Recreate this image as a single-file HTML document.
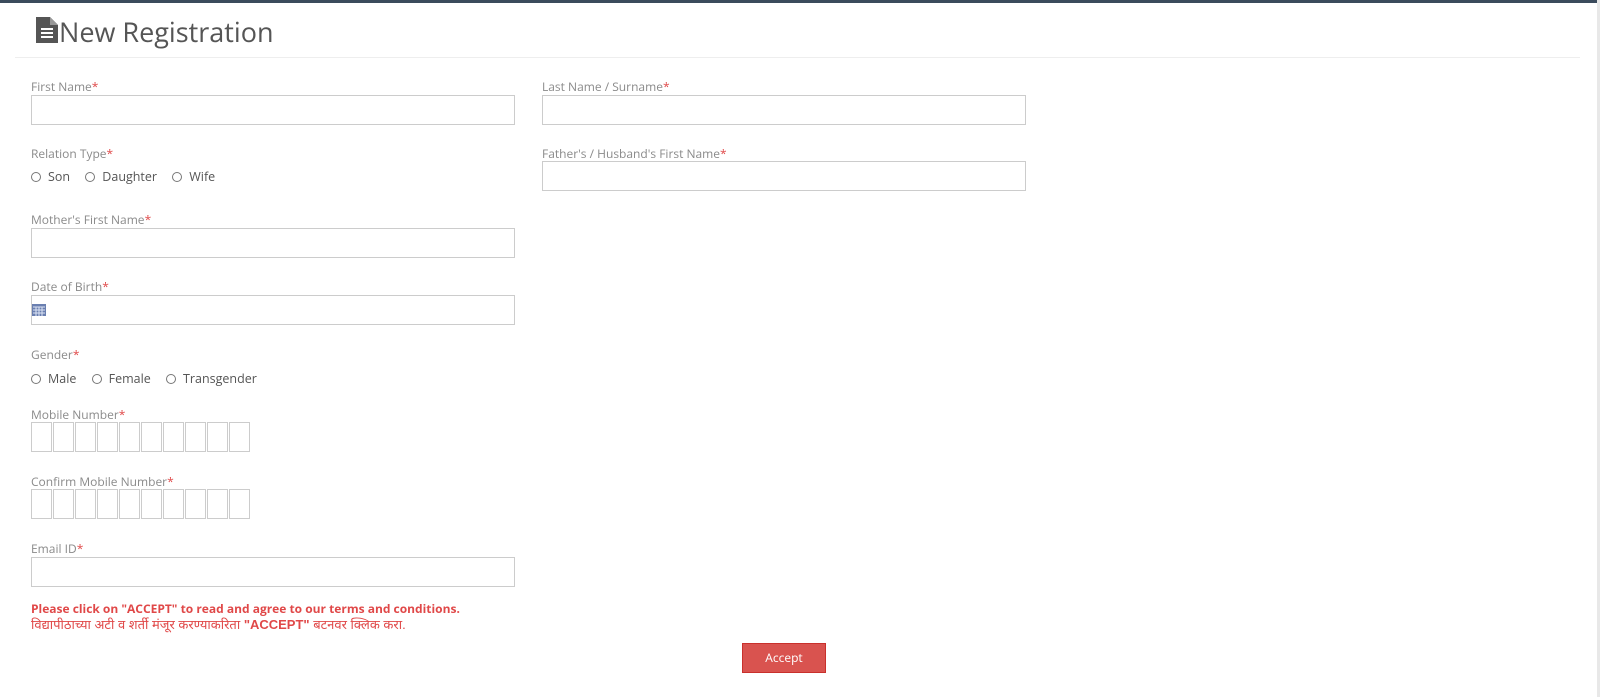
<!DOCTYPE html>
<html><head><meta charset="utf-8"><style>
body{margin:0;width:1600px;height:697px;background:#fff;position:relative;overflow:hidden;font-family:"Open Sans","Liberation Sans","Noto Sans CJK SC",sans-serif;}
.a{position:absolute}
.lbl{position:absolute;font-size:12px;color:#8a8a8a;white-space:nowrap}
.lbl b{color:#e04848;font-weight:normal}
.in{position:absolute;border:1px solid #ccc;box-sizing:border-box;height:30px;background:#fff}
.rad{position:absolute;font-size:12.5px;color:#555;white-space:nowrap}
.rad i{display:inline-block;width:8px;height:8px;border:1px solid #777;border-radius:50%;vertical-align:-1px;margin-right:7px}
.rad span{margin-right:12px}
.boxes{position:absolute;display:flex}
.boxes div{height:30px;border:1px solid #ccc;box-sizing:border-box;margin-right:1px;width:21px}
</style></head><body>
<div class="a" style="left:0;top:0;width:1600px;height:3px;background:#3b4b5c"></div>
<div class="a" style="left:1597px;top:0;width:3px;height:697px;background:#e8e8e8"></div>
<svg class="a" style="left:36px;top:17px" width="22" height="26" viewBox="0 0 22 26"><path d="M0 0H14L22 8V26H0Z" fill="#555"/><path d="M14 0V8H22" fill="#999"/><path d="M5 12H17M5 16H17M5 20H17" stroke="#fff" stroke-width="2"/></svg>
<div class="a" style="left:59px;top:13px;font-size:27px;color:#555">New Registration</div>
<div class="a" style="left:15px;top:57px;width:1565px;height:1px;background:#eee"></div>

<div class="lbl" style="left:31px;top:78px">First Name<b>*</b></div>
<div class="in" style="left:31px;top:95px;width:484px"></div>
<div class="lbl" style="left:542px;top:78px">Last Name / Surname<b>*</b></div>
<div class="in" style="left:542px;top:95px;width:484px"></div>

<div class="lbl" style="left:31px;top:145px">Relation Type<b>*</b></div>
<div class="rad" style="left:31px;top:168px"><i></i><span>Son</span> <i></i><span>Daughter</span> <i></i><span>Wife</span></div>
<div class="lbl" style="left:542px;top:145px">Father's / Husband's First Name<b>*</b></div>
<div class="in" style="left:542px;top:161px;width:484px"></div>

<div class="lbl" style="left:31px;top:211px">Mother's First Name<b>*</b></div>
<div class="in" style="left:31px;top:228px;width:484px"></div>

<div class="lbl" style="left:31px;top:278px">Date of Birth<b>*</b></div>
<div class="in" style="left:31px;top:295px;width:484px"></div>
<svg class="a" style="left:32px;top:304px" width="14" height="12"><rect width="14" height="12" fill="#6a7fb0"/><path d="M1 3H13M1 6H13M1 9H13M4 3V12M7 3V12M10 3V12" stroke="#dde4f5" stroke-width="1"/></svg>

<div class="lbl" style="left:31px;top:346px">Gender<b>*</b></div>
<div class="rad" style="left:31px;top:370px"><i></i><span>Male</span> <i></i><span>Female</span> <i></i><span>Transgender</span></div>

<div class="lbl" style="left:31px;top:406px">Mobile Number<b>*</b></div>
<div class="boxes" style="left:31px;top:422px"><div></div><div></div><div></div><div></div><div></div><div></div><div></div><div></div><div></div><div></div></div>
<div class="lbl" style="left:31px;top:473px">Confirm Mobile Number<b>*</b></div>
<div class="boxes" style="left:31px;top:489px"><div></div><div></div><div></div><div></div><div></div><div></div><div></div><div></div><div></div><div></div></div>

<div class="lbl" style="left:31px;top:540px">Email ID<b>*</b></div>
<div class="in" style="left:31px;top:557px;width:484px"></div>

<div class="a" style="left:31px;top:600px;font-size:12px;font-weight:bold;color:#e04848">Please click on "ACCEPT" to read and agree to our terms and conditions.</div>
<div class="a" style="left:31px;top:617px;font-size:13px;color:#e04848;font-family:'Liberation Sans','Noto Sans Devanagari',sans-serif">विद्यापीठाच्या अटी व शर्ती मंजूर करण्याकरिता <b>"ACCEPT"</b> बटनवर क्लिक करा.</div>

<div class="a" style="left:742px;top:643px;width:84px;height:30px;background:#d9534f;border:1px solid #c9302c;box-sizing:border-box;color:#fff;font-size:12px;text-align:center;line-height:28px">Accept</div>
</body></html>
